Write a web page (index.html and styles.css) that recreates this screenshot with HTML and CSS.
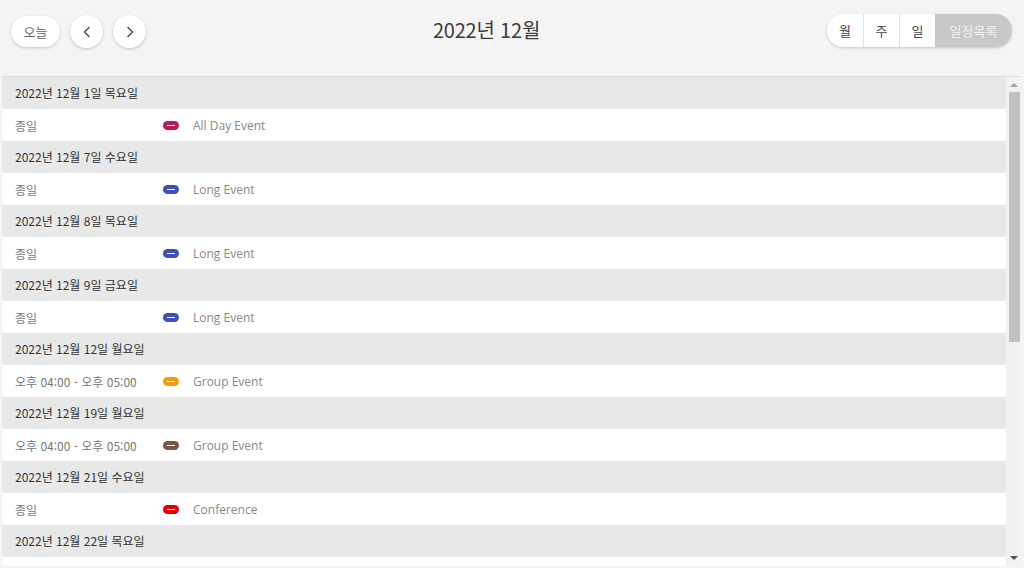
FILE: index.html
```html
<!DOCTYPE html>
<html lang="ko">
<head>
<meta charset="UTF-8">
<meta name="viewport" content="width=device-width, initial-scale=1.0">
<title>일정목록</title>
<link rel="stylesheet" href="styles.css">
</head>
<body>
    <div class="calendar">
        <div class="toolbar">
            <div class="toolbar-left">
                <button class="btn-today">오늘</button>
                <button class="btn-round">
                    <svg width="10" height="12" viewBox="0 0 10 12"><path d="M7 1.5 L2.5 6 L7 10.5" fill="none" stroke="#555" stroke-width="1.6" stroke-linecap="round" stroke-linejoin="round"/></svg>
                </button>
                <button class="btn-round">
                    <svg width="10" height="12" viewBox="0 0 10 12"><path d="M3 1.5 L7.5 6 L3 10.5" fill="none" stroke="#555" stroke-width="1.6" stroke-linecap="round" stroke-linejoin="round"/></svg>
                </button>
            </div>
            <h2 class="title">2022년 12월</h2>
            <div class="view-group">
                <button class="view-btn first">월</button>
                <button class="view-btn">주</button>
                <button class="view-btn">일</button>
                <button class="view-btn active">일정목록</button>
            </div>
        </div>

        <div class="list-wrap">
            <div class="list">
                <div class="day">2022년 12월 1일 목요일</div>
                <div class="event"><span class="time">종일</span><span class="dot" style="background:#b7195d"></span><span class="name">All Day Event</span></div>
                <div class="day">2022년 12월 7일 수요일</div>
                <div class="event"><span class="time">종일</span><span class="dot" style="background:#3f51b5"></span><span class="name">Long Event</span></div>
                <div class="day">2022년 12월 8일 목요일</div>
                <div class="event"><span class="time">종일</span><span class="dot" style="background:#3f51b5"></span><span class="name">Long Event</span></div>
                <div class="day">2022년 12월 9일 금요일</div>
                <div class="event"><span class="time">종일</span><span class="dot" style="background:#3f51b5"></span><span class="name">Long Event</span></div>
                <div class="day">2022년 12월 12일 월요일</div>
                <div class="event"><span class="time">오후 04:00 - 오후 05:00</span><span class="dot" style="background:#f39c12"></span><span class="name">Group Event</span></div>
                <div class="day">2022년 12월 19일 월요일</div>
                <div class="event"><span class="time">오후 04:00 - 오후 05:00</span><span class="dot" style="background:#795548"></span><span class="name">Group Event</span></div>
                <div class="day">2022년 12월 21일 수요일</div>
                <div class="event"><span class="time">종일</span><span class="dot" style="background:#e00000"></span><span class="name">Conference</span></div>
                <div class="day">2022년 12월 22일 목요일</div>
                <div class="event"><span class="time">종일</span><span class="dot" style="background:#e00000"></span><span class="name">Conference</span></div>
            </div>
            <div class="scrollbar">
                <span class="arrow-up"></span>
                <span class="thumb"></span>
                <span class="arrow-down"></span>
            </div>
        </div>
    </div>
</body>
</html>
```

FILE: styles.css
```css
body {
    margin: 0;
    padding: 0;
    background-color: #f4f4f4;
    font-family: "Noto Sans CJK KR", "Open Sans", sans-serif;
}

.calendar {
    height: 568px;
    display: flex;
    flex-direction: column;
    padding: 0 3px 0 2px;
    box-sizing: border-box;
}

.toolbar {
    height: 76px;
    flex-shrink: 0;
    display: flex;
    align-items: flex-start;
    justify-content: space-between;
    padding: 14px 9px 0 9px;
    box-sizing: border-box;
}

.toolbar-left {
    display: flex;
    align-items: center;
    gap: 10px;
    padding-top: 1px;
}

.btn-today {
    width: 49px;
    height: 31px;
    border: none;
    border-radius: 16px;
    background: #fff;
    color: #666;
    font-family: inherit;
    font-size: 13px;
    box-shadow: 0 1px 3px rgba(0, 0, 0, 0.2);
    padding: 0;
}

.btn-round {
    width: 33px;
    height: 33px;
    border: none;
    border-radius: 50%;
    background: #fff;
    box-shadow: 0 1px 3px rgba(0, 0, 0, 0.22);
    display: flex;
    align-items: center;
    justify-content: center;
    padding: 0;
}

.title {
    margin: 0;
    padding-top: 2px;
    font-family: "Noto Sans CJK KR", sans-serif;
    font-size: 20px;
    line-height: 28px;
    font-weight: 400;
    color: #3a3a3a;
    letter-spacing: -0.2px;
}

.view-group {
    display: flex;
    height: 33px;
    border-radius: 17px;
    overflow: hidden;
    box-shadow: 0 1px 3px rgba(0, 0, 0, 0.2);
}

.view-btn {
    border: none;
    border-left: 1px solid #e2e2e2;
    background: #fff;
    color: #444;
    font-family: inherit;
    font-size: 13px;
    width: 36px;
    padding: 0;
}

.view-btn.first {
    border-left: none;
}

.view-btn.active {
    background: #c8c8c8;
    color: #f2f2f2;
    width: 77px;
    border-left: none;
}

.list-wrap {
    flex: 1;
    min-height: 0;
    display: flex;
    border-top: 1px solid #dcdcdc;
    margin-bottom: 2px;
}

.list {
    flex: 1;
    overflow: hidden;
    background: #fff;
}

/* fake scrollbar, the screenshot browser hides real ones */
.scrollbar {
    width: 15px;
    flex-shrink: 0;
    background: #f1f1f1;
    display: flex;
    flex-direction: column;
    align-items: center;
}

.arrow-up,
.arrow-down {
    width: 0;
    height: 0;
    border-left: 4px solid transparent;
    border-right: 4px solid transparent;
}

.arrow-up {
    border-bottom: 4px solid #a3a3a3;
    margin: 6px 0 5px;
}

.arrow-down {
    border-top: 4px solid #505050;
    margin: auto 0 6px;
}

.thumb {
    width: 11px;
    height: 250px;
    background: #c1c1c1;
    margin-left: 1px;
}

.day {
    height: 32px;
    line-height: 32px;
    background: #e8e8e8;
    color: #333;
    font-size: 12px;
    padding-left: 13px;
}

.event {
    height: 32px;
    display: flex;
    align-items: center;
    background: #fff;
    font-size: 12px;
    padding-left: 13px;
}

.time {
    width: 148px;
    color: #777;
}

.dot {
    width: 16px;
    height: 9px;
    border-radius: 5px;
    margin-right: 14px;
    position: relative;
}

.dot::after {
    content: "";
    position: absolute;
    left: 4px;
    right: 4px;
    top: 4px;
    height: 1px;
    background: #fff;
}

.name {
    color: #888;
    font-family: "Open Sans", "Noto Sans CJK KR", sans-serif;
}
```
